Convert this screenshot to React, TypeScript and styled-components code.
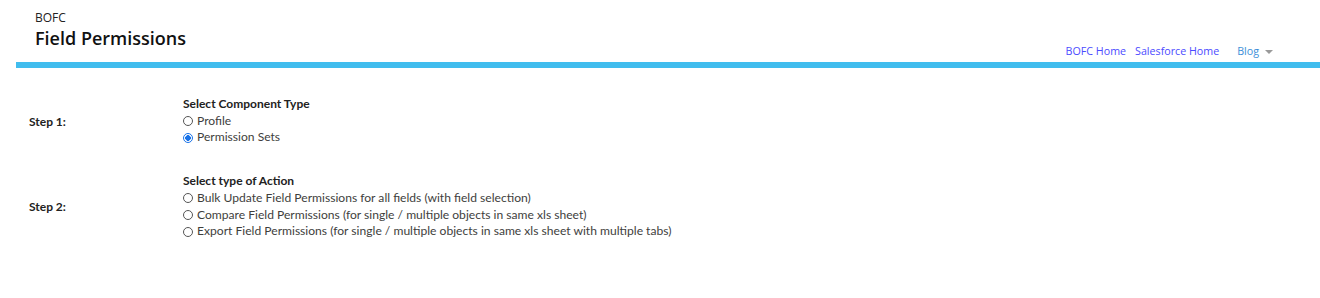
import React from "react";
import styled, { createGlobalStyle } from "styled-components";

const Global = createGlobalStyle`
  html, body { margin: 0; padding: 0; background: #fff; }
  body { font-family: Lato, "Open Sans", Arial, sans-serif; color: #2b2826; }
`;

const Page = styled.div`
  width: 1320px;
  height: 298px;
  background: #fff;
  overflow: hidden;
`;

const Header = styled.header`
  display: flex;
  justify-content: space-between;
  align-items: flex-end;
  padding-top: 10px;
  margin-left: 16px;
  height: 52px;
  padding-left: 19px;
  border-bottom: 6px solid #41bdee;
`;

const TitleBlock = styled.div`
  display: flex;
  flex-direction: column;
  align-self: flex-start;
`;

const Breadcrumb = styled.div`
  font-family: "Open Sans", Arial, sans-serif;
  font-size: 12px;
  color: #222;
  line-height: 16px;
`;

const Title = styled.h1`
  margin: 0;
  font-family: "Open Sans", Arial, sans-serif;
  font-size: 18px;
  font-weight: 600;
  color: #111;
  line-height: 25px;
`;

const Nav = styled.nav`
  display: flex;
  align-items: center;
  gap: 9px;
  padding-right: 47px;
  margin-bottom: 4px;
  font-family: "Open Sans", Arial, sans-serif;
  font-size: 10.7px;
`;

const NavLink = styled.a<{ $light?: boolean }>`
  color: ${(p) => (p.$light ? "#3d8fd8" : "#4b4bff")};
  text-decoration: none;
  display: flex;
  align-items: center;
  gap: 6px;
  margin-left: ${(p) => (p.$light ? "9px" : "0")};
`;

const Caret = styled.span`
  width: 0;
  height: 0;
  border-left: 4px solid transparent;
  border-right: 4px solid transparent;
  border-top: 4px solid #9a9a9a;
  margin-top: 2px;
`;

const Form = styled.div`
  display: grid;
  grid-template-columns: 154px 1fr;
  row-gap: 27px;
  padding: 28px 0 0 29px;
`;

const StepLabel = styled.div`
  align-self: center;
  font-size: 12px;
  font-weight: 700;
  color: #222;
`;

const Group = styled.div`
  display: flex;
  flex-direction: column;
`;

const GroupTitle = styled.div`
  font-size: 12px;
  font-weight: 700;
  color: #222;
  line-height: 16.7px;
`;

const Option = styled.label`
  display: flex;
  align-items: center;
  gap: 4px;
  font-size: 12.1px;
  color: #3e3e3c;
  line-height: 16.7px;
`;

const Radio = styled.span<{ $checked?: boolean }>`
  box-sizing: border-box;
  width: 10px;
  height: 10px;
  border-radius: 50%;
  border: 1px solid ${(p) => (p.$checked ? "#1a73e8" : "#555")};
  background: ${(p) => (p.$checked ? "radial-gradient(circle, #1a73e8 0 2.6px, #fff 3px)" : "#fff")};
  flex: none;
`;

const steps = [
  {
    label: "Step 1:",
    title: "Select Component Type",
    options: [
      { text: "Profile", checked: false },
      { text: "Permission Sets", checked: true },
    ],
  },
  {
    label: "Step 2:",
    title: "Select type of Action",
    options: [
      { text: "Bulk Update Field Permissions for all fields (with field selection)", checked: false },
      { text: "Compare Field Permissions (for single / multiple objects in same xls sheet)", checked: false },
      { text: "Export Field Permissions (for single / multiple objects in same xls sheet with multiple tabs)", checked: false },
    ],
  },
];

export default function App() {
  return (
    <Page>
      <Global />
      <Header>
        <TitleBlock>
          <Breadcrumb>BOFC</Breadcrumb>
          <Title>Field Permissions</Title>
        </TitleBlock>
        <Nav>
          <NavLink href="#">BOFC Home</NavLink>
          <NavLink href="#">Salesforce Home</NavLink>
          <NavLink href="#" $light>
            Blog <Caret />
          </NavLink>
        </Nav>
      </Header>
      <Form>
        {steps.map((s) => (
          <React.Fragment key={s.label}>
            <StepLabel>{s.label}</StepLabel>
            <Group>
              <GroupTitle>{s.title}</GroupTitle>
              {s.options.map((o) => (
                <Option key={o.text}>
                  <Radio $checked={o.checked} />
                  {o.text}
                </Option>
              ))}
            </Group>
          </React.Fragment>
        ))}
      </Form>
    </Page>
  );
}
